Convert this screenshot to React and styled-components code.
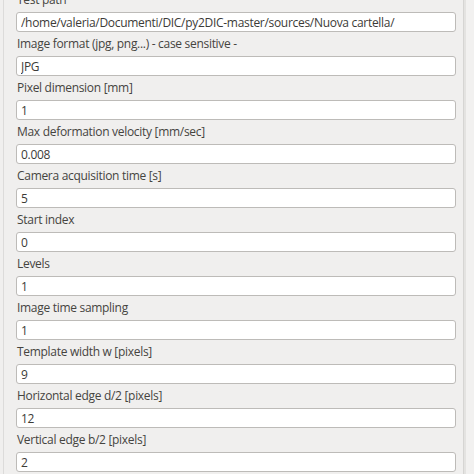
import React from "react";
import styled, { createGlobalStyle } from "styled-components";

const fields = [
  ["Test path", "/home/valeria/Documenti/DIC/py2DIC-master/sources/Nuova cartella/"],
  ["Image format (jpg, png...) - case sensitive -", "JPG"],
  ["Pixel dimension [mm]", "1"],
  ["Max deformation velocity [mm/sec]", "0.008"],
  ["Camera acquisition time [s]", "5"],
  ["Start index", "0"],
  ["Levels", "1"],
  ["Image time sampling", "1"],
  ["Template width w [pixels]", "9"],
  ["Horizontal edge d/2 [pixels]", "12"],
  ["Vertical edge b/2 [pixels]", "2"],
];

const App = () => {
  return (
    <>
      <GlobalStyle />
      <Window>
        <Panel>
          {fields.map(([label, value]) => (
            <Field key={label}>
              <Label>{label}</Label>
              <Input defaultValue={value} />
            </Field>
          ))}
        </Panel>
        <ScrollEdge />
      </Window>
    </>
  );
};

export default App;

const GlobalStyle = createGlobalStyle`
  html, body {
    margin: 0;
    padding: 0;
    background: #f0efee;
    overflow: hidden;
  }
`;

const Window = styled.div`
  display: flex;
  width: 474px;
  height: 474px;
  overflow: hidden;
  background: #f0efee;
  font-family: "Open Sans", sans-serif;
`;

const Panel = styled.div`
  flex: 1;
  display: flex;
  flex-direction: column;
  margin-top: -12px;
  margin-left: 3px;
  padding: 0 7px 0 12px;
  border-left: 1px solid #dcdbda;
`;

const Field = styled.div`
  display: flex;
  flex-direction: column;
`;

const Label = styled.div`
  height: 24px;
  line-height: 24px;
  padding-left: 1px;
  font-size: 12px;
  letter-spacing: -0.3px;
  color: #45443f;
  white-space: nowrap;
`;

const Input = styled.input`
  box-sizing: border-box;
  height: 20px;
  width: 100%;
  margin: 0;
  padding: 0 4px;
  border: 1px solid #bdbbb8;
  border-radius: 3px;
  background: #ffffff;
  font-family: inherit;
  font-size: 12px;
  letter-spacing: -0.3px;
  color: #3c3b37;
  outline: none;
`;

const ScrollEdge = styled.div`
  width: 10px;
  border-left: 1px solid #d6d5d3;
  box-shadow: inset 2px 0 0 #e4e3e1;
  background: #f2f1f0;
`;
